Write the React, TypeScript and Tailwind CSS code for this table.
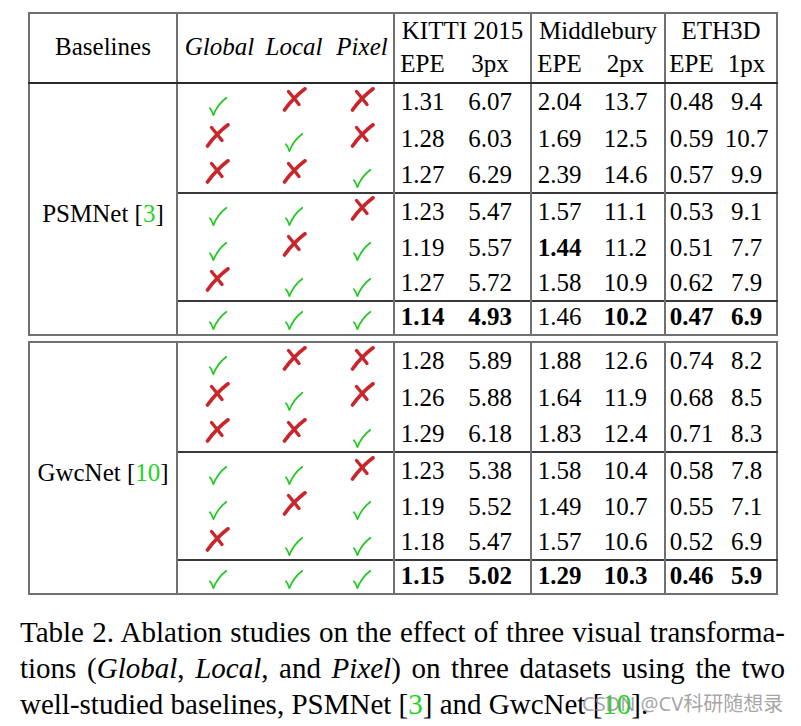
import React from 'react';

type Mark = 1 | 0;

const Check = () => (
  <svg width="18" height="19" viewBox="0 0 18 19" className="inline-block translate-y-[2px]">
    <path d="M0.8 11.2 Q2.8 13 4.4 18.2 Q8.5 7.5 17.4 0.8" fill="none" stroke="#22c922" strokeWidth="1.7" strokeLinecap="round" strokeLinejoin="round" />
  </svg>
);

const Cross = () => (
  <svg width="25" height="25" viewBox="0 0 25 25" className="inline-block -translate-y-[4px]">
    <path d="M2.5 23 Q11 11 23 1.8" fill="none" stroke="#c9262b" strokeWidth="3.6" strokeLinecap="round" />
    <path d="M6.5 4.5 Q12 11 17 17.5" fill="none" stroke="#c9262b" strokeWidth="3.4" strokeLinecap="round" />
  </svg>
);

type Row = { m: Mark[]; v: string[]; b?: boolean[] };

const marks: Mark[][] = [
  [1, 0, 0],
  [0, 1, 0],
  [0, 0, 1],
  [1, 1, 0],
  [1, 0, 1],
  [0, 1, 1],
  [1, 1, 1],
];

const psm: Row[] = [
  { m: marks[0], v: ['1.31', '6.07', '2.04', '13.7', '0.48', '9.4'] },
  { m: marks[1], v: ['1.28', '6.03', '1.69', '12.5', '0.59', '10.7'] },
  { m: marks[2], v: ['1.27', '6.29', '2.39', '14.6', '0.57', '9.9'] },
  { m: marks[3], v: ['1.23', '5.47', '1.57', '11.1', '0.53', '9.1'] },
  { m: marks[4], v: ['1.19', '5.57', '1.44', '11.2', '0.51', '7.7'], b: [false, false, true, false, false, false] },
  { m: marks[5], v: ['1.27', '5.72', '1.58', '10.9', '0.62', '7.9'] },
  { m: marks[6], v: ['1.14', '4.93', '1.46', '10.2', '0.47', '6.9'], b: [true, true, false, true, true, true] },
];

const gwc: Row[] = [
  { m: marks[0], v: ['1.28', '5.89', '1.88', '12.6', '0.74', '8.2'] },
  { m: marks[1], v: ['1.26', '5.88', '1.64', '11.9', '0.68', '8.5'] },
  { m: marks[2], v: ['1.29', '6.18', '1.83', '12.4', '0.71', '8.3'] },
  { m: marks[3], v: ['1.23', '5.38', '1.58', '10.4', '0.58', '7.8'] },
  { m: marks[4], v: ['1.19', '5.52', '1.49', '10.7', '0.55', '7.1'] },
  { m: marks[5], v: ['1.18', '5.47', '1.57', '10.6', '0.52', '6.9'] },
  { m: marks[6], v: ['1.15', '5.02', '1.29', '10.3', '0.46', '5.9'], b: [true, true, true, true, true, true] },
];

const Cols = () => (
  <colgroup>
    <col className="w-[148px]" />
    <col className="w-[80px]" />
    <col className="w-[74px]" />
    <col className="w-[63px]" />
    <col className="w-[56px]" />
    <col className="w-[81px]" />
    <col className="w-[56px]" />
    <col className="w-[78px]" />
    <col className="w-[52px]" />
    <col className="w-[60px]" />
  </colgroup>
);

function Body({ name, cite, rows }: { name: string; cite: string; rows: Row[] }) {
  return (
    <tbody>
      {rows.map((r, i) => {
        const line = i === 3 || i === 6 ? 'border-t-2 border-t-[#3a3a3a]' : '';
        const last = i === 6 ? 'pb-[4px]' : '';
        return (
          <tr key={i} className={i === 6 ? 'h-[34px]' : i < 3 ? 'h-[36.7px]' : 'h-[36px]'}>
            {i === 0 && (
              <td rowSpan={7} className="border-r-2 border-r-[#707070] text-center align-middle pt-[8px]">
                {name} [<span className="text-[#22d422]">{cite}</span>]
              </td>
            )}
            {r.m.map((m, j) => (
              <td key={j} className={`text-center align-middle p-0 leading-none ${line} ${last} ${j === 2 ? 'border-r-2 border-r-[#707070]' : ''}`}>
                {m ? <Check /> : <Cross />}
              </td>
            ))}
            {r.v.map((v, j) => (
              <td
                key={j}
                className={`text-center align-middle p-0 ${line} ${last} ${r.b?.[j] ? 'font-bold' : ''} ${j === 1 || j === 3 ? 'border-r-2 border-r-[#707070]' : ''}`}
              >
                {v}
              </td>
            ))}
          </tr>
        );
      })}
    </tbody>
  );
}

export default function App() {
  return (
    <div className="w-[801px] h-[726px] bg-white text-black [font-family:'Liberation_Serif','Times_New_Roman',serif] relative overflow-hidden">
      <div className="pl-[28px] pt-[12px]">
        <table className="table-fixed border-collapse w-[748px] border-2 border-[#707070] text-[25px] leading-none">
          <Cols />
          <thead>
            <tr className="h-[35px]">
              <th rowSpan={2} className="font-normal text-center align-middle border-r-2 border-r-[#707070] border-b-2 border-b-[#2a2a2a] pb-[4px]">Baselines</th>
              <th rowSpan={2} className="font-normal italic text-center align-middle border-b-2 border-b-[#2a2a2a] pl-[4px] pb-[4px]">Global</th>
              <th rowSpan={2} className="font-normal italic text-center align-middle border-b-2 border-b-[#2a2a2a] pb-[4px]">Local</th>
              <th rowSpan={2} className="font-normal italic text-center align-middle border-r-2 border-r-[#707070] border-b-2 border-b-[#2a2a2a] pb-[4px]">Pixel</th>
              <th colSpan={2} className="font-normal text-center align-middle border-r-2 border-r-[#707070] pb-[2px]">KITTI 2015</th>
              <th colSpan={2} className="font-normal text-center align-middle border-r-2 border-r-[#707070] pb-[2px]">Middlebury</th>
              <th colSpan={2} className="font-normal text-center align-middle pb-[2px]">ETH3D</th>
            </tr>
            <tr className="h-[35px]">
              <th className="font-normal text-center align-middle border-b-2 border-b-[#2a2a2a] pb-[3px]">EPE</th>
              <th className="font-normal text-center align-middle border-b-2 border-b-[#2a2a2a] border-r-2 border-r-[#707070] pb-[3px]">3px</th>
              <th className="font-normal text-center align-middle border-b-2 border-b-[#2a2a2a] pb-[3px]">EPE</th>
              <th className="font-normal text-center align-middle border-b-2 border-b-[#2a2a2a] border-r-2 border-r-[#707070] pb-[3px]">2px</th>
              <th className="font-normal text-center align-middle border-b-2 border-b-[#2a2a2a] pb-[3px]">EPE</th>
              <th className="font-normal text-center align-middle border-b-2 border-b-[#2a2a2a] pb-[3px]">1px</th>
            </tr>
          </thead>
          <Body name="PSMNet" cite="3" rows={psm} />
        </table>

        <table className="mt-[5px] table-fixed border-collapse w-[748px] border-2 border-[#707070] text-[25px] leading-none">
          <Cols />
          <Body name="GwcNet" cite="10" rows={gwc} />
        </table>
      </div>

      <div className="absolute left-[20px] top-[614px] w-[765px] text-[29px] leading-[36px]">
        <div className="whitespace-nowrap [text-align-last:justify]">
          Table 2. Ablation studies on the effect of three visual transforma-
        </div>
        <div className="whitespace-nowrap [text-align-last:justify]">
          tions (<i>Global</i>, <i>Local</i>, and <i>Pixel</i>) on three datasets using the two
        </div>
        <div className="whitespace-nowrap">
          well-studied baselines, PSMNet [<span className="text-[#22d422]">3</span>] and GwcNet [<span className="text-[#22d422]">10</span>].
        </div>
      </div>

      <div className="absolute left-[582px] top-[694px] text-[20px] leading-none text-[#8e8e8e]/80 [font-family:'Noto_Sans','Noto_Sans_CJK_SC',sans-serif] whitespace-nowrap">
        CSDN @CV科研随想录
      </div>
    </div>
  );
}
